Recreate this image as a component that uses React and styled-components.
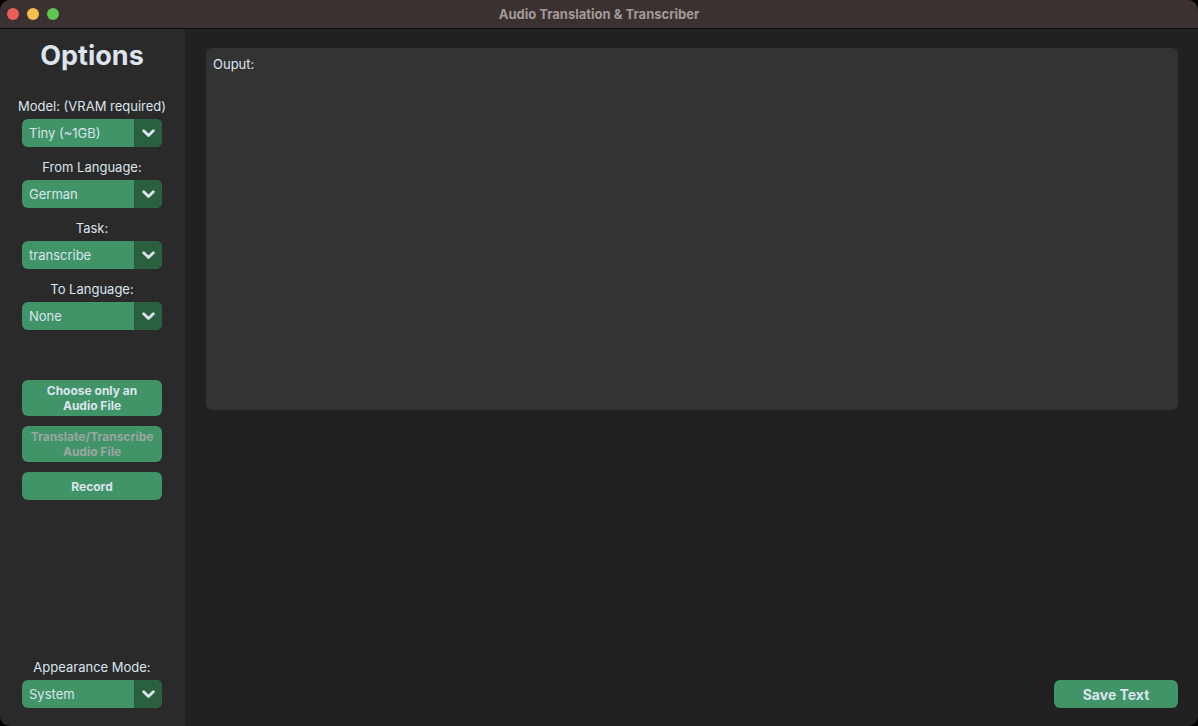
import React from 'react'
import styled, { createGlobalStyle } from 'styled-components'

const GlobalStyle = createGlobalStyle`
	html, body {
		margin: 0;
		padding: 0;
		background: #000;
	}
	body {
		font-family: Inter, "Noto Sans", "Liberation Sans", sans-serif;
		-webkit-font-smoothing: antialiased;
	}
`

const Window = styled.div`
	width: 1198px;
	height: 726px;
	display: flex;
	flex-direction: column;
	background: #212121;
	border-radius: 10px;
	overflow: hidden;
`

const TitleBar = styled.div`
	height: 28px;
	flex-shrink: 0;
	display: flex;
	align-items: center;
	position: relative;
	background: #3a3130;
	border-bottom: 1px solid #0c0c0c;
`

const Lights = styled.div`
	display: flex;
	gap: 8px;
	padding-left: 7px;
`

const Light = styled.span`
	width: 12px;
	height: 12px;
	border-radius: 50%;
	background: ${p => p.color};
`

const Title = styled.div`
	position: absolute;
	left: 0;
	right: 0;
	text-align: center;
	font-size: 13px;
	font-weight: 700;
	color: #a29a99;
	pointer-events: none;
`

const Body = styled.div`
	flex: 1;
	display: flex;
	min-height: 0;
`

const Sidebar = styled.div`
	width: 185px;
	flex-shrink: 0;
	background: #2a2a2a;
	display: flex;
	flex-direction: column;
	align-items: center;
	padding: 11px 1px 18px 0;
	box-sizing: border-box;
`

const Heading = styled.h1`
	margin: 0 0 26px;
	font-size: 27px;
	line-height: 32px;
	font-weight: 700;
	color: #dce4ee;
`

const Field = styled.div`
	display: flex;
	flex-direction: column;
	align-items: center;
	gap: 5px;
	margin-bottom: ${p => p.last ? '0' : '12px'};
`

const Label = styled.div`
	font-size: 13px;
	line-height: 16px;
	color: #dce4ee;
`

const Select = styled.div`
	width: 140px;
	height: 28px;
	display: flex;
	border-radius: 6px;
	overflow: hidden;
	background: #409468;
	color: #dce4ee;
	font-size: 13px;
`

const SelectValue = styled.div`
	flex: 1;
	display: flex;
	align-items: center;
	padding-left: 7px;
`

const SelectArrow = styled.div`
	width: 28px;
	display: flex;
	align-items: center;
	justify-content: center;
	background: #2a5f40;
`

const Actions = styled.div`
	display: flex;
	flex-direction: column;
	gap: 10px;
	margin-top: 38px;
`

const Button = styled.button`
	width: ${p => p.wide ? '124px' : '140px'};
	min-height: 28px;
	padding: 3px 4px;
	border: none;
	border-radius: 6px;
	background: #409468;
	color: ${p => p.disabled ? '#9ca6a1' : '#dce4ee'};
	font-family: inherit;
	font-size: ${p => p.wide ? '14px' : '12px'};
	line-height: 15px;
	font-weight: 700;
	text-align: center;
	cursor: pointer;
`

const Spacer = styled.div`
	flex: 1;
`

const Main = styled.div`
	flex: 1;
	display: flex;
	flex-direction: column;
	padding: 19px 20px 18px 21px;
`

const Output = styled.div`
	height: 362px;
	border-radius: 6px;
	background: #333333;
	padding: 8px 7px;
	box-sizing: border-box;
	color: #dce4ee;
	font-size: 13px;
	line-height: 16px;
`

const Footer = styled.div`
	display: flex;
	justify-content: flex-end;
`

const Chevron = () =>
	<svg width="13" height="9" viewBox="0 0 13 9">
		<path d="M1.7 1.7 L6.5 6.5 L11.3 1.7" fill="none" stroke="#dce4ee" strokeWidth="2.8" strokeLinecap="round" strokeLinejoin="round" />
	</svg>

const Dropdown = ({ label, value, last }) =>
	<Field last={last}>
		<Label>{label}</Label>
		<Select>
			<SelectValue>{value}</SelectValue>
			<SelectArrow><Chevron /></SelectArrow>
		</Select>
	</Field>

const App = () =>
	<>
		<GlobalStyle />
		<Window>
			<TitleBar>
				<Lights>
					<Light color="#ec5f57" />
					<Light color="#f3be4f" />
					<Light color="#5fc553" />
				</Lights>
				<Title>Audio Translation &amp; Transcriber</Title>
			</TitleBar>
			<Body>
				<Sidebar>
					<Heading>Options</Heading>
					<Dropdown label="Model: (VRAM required)" value="Tiny (~1GB)" />
					<Dropdown label="From Language:" value="German" />
					<Dropdown label="Task:" value="transcribe" />
					<Dropdown label="To Language:" value="None" />
					<Actions>
						<Button>Choose only an<br />Audio File</Button>
						<Button disabled>Translate/Transcribe<br />Audio File</Button>
						<Button>Record</Button>
					</Actions>
					<Spacer />
					<Dropdown label="Appearance Mode:" value="System" last />
				</Sidebar>
				<Main>
					<Output>Ouput:</Output>
					<Spacer />
					<Footer>
						<Button wide>Save Text</Button>
					</Footer>
				</Main>
			</Body>
		</Window>
	</>

export default App
